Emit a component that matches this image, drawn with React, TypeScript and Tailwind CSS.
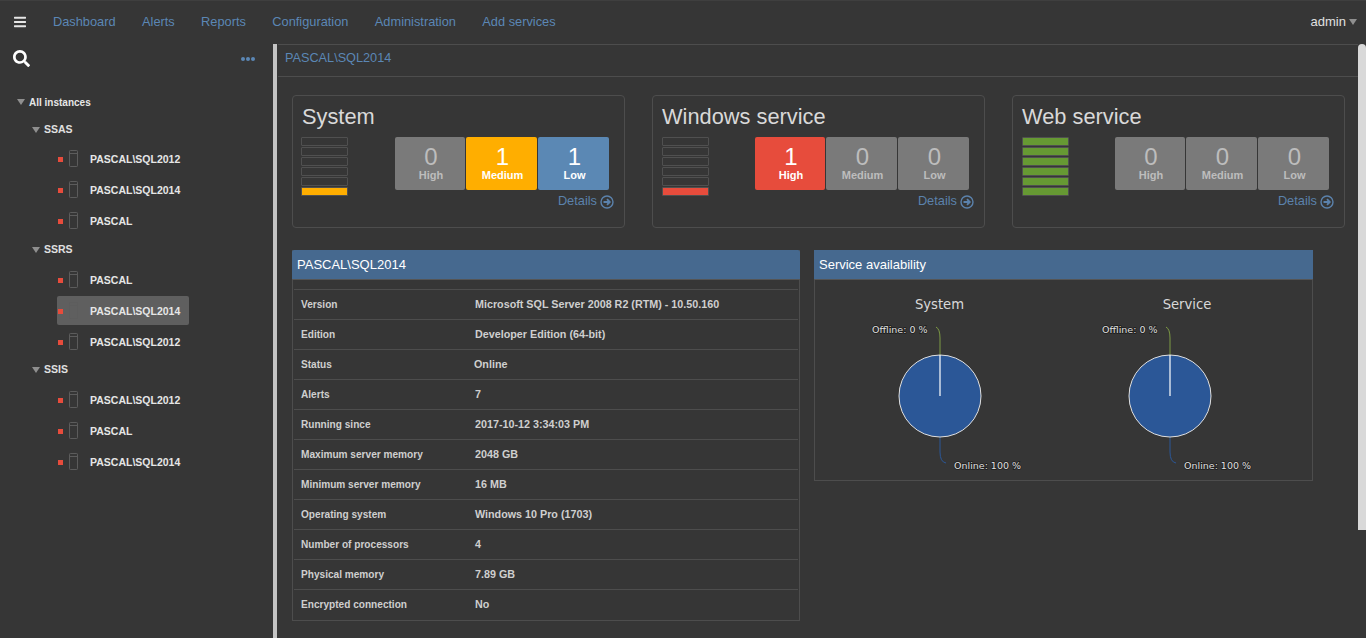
import { FaBars, FaSearch } from 'react-icons/fa';

const NAV = ['Dashboard', 'Alerts', 'Reports', 'Configuration', 'Administration', 'Add services'];

const TREE = [
  { name: 'SSAS', top: 'h-[29px]', items: ['PASCAL\\SQL2012', 'PASCAL\\SQL2014', 'PASCAL'] },
  { name: 'SSRS', top: 'h-[28px] pb-[3px]', items: ['PASCAL', 'PASCAL\\SQL2014', 'PASCAL\\SQL2012'], selected: 1 },
  { name: 'SSIS', top: 'h-[27px] pb-[4px]', items: ['PASCAL\\SQL2012', 'PASCAL', 'PASCAL\\SQL2014'] },
];

const INFO = [
  ['Version', 'Microsoft SQL Server 2008 R2 (RTM) - 10.50.160'],
  ['Edition', 'Developer Edition (64-bit)'],
  ['Status', 'Online'],
  ['Alerts', '7'],
  ['Running since', '2017-10-12 3:34:03 PM'],
  ['Maximum server memory', '2048 GB'],
  ['Minimum server memory', '16 MB'],
  ['Operating system', 'Windows 10 Pro (1703)'],
  ['Number of processors', '4'],
  ['Physical memory', '7.89 GB'],
  ['Encrypted connection', 'No'],
];

const CARDS = [
  {
    title: 'System',
    gaugeOffset: '-ml-px',
    bars: ['', '', '', '', '', 'bg-[#ffae00]'],
    tiles: [
      { n: 0, label: 'High', tone: 'bg-[#7a7a7a] text-[#bdbdbd]' },
      { n: 1, label: 'Medium', tone: 'bg-[#ffae00] text-white' },
      { n: 1, label: 'Low', tone: 'bg-[#5b88b4] text-white' },
    ],
  },
  {
    title: 'Windows service',
    gaugeOffset: '',
    bars: ['', '', '', '', '', 'bg-[#e74c3c]'],
    tiles: [
      { n: 1, label: 'High', tone: 'bg-[#e74c3c] text-white' },
      { n: 0, label: 'Medium', tone: 'bg-[#7a7a7a] text-[#bdbdbd]' },
      { n: 0, label: 'Low', tone: 'bg-[#7a7a7a] text-[#bdbdbd]' },
    ],
  },
  {
    title: 'Web service',
    gaugeOffset: '',
    bars: ['bg-[#669933]', 'bg-[#669933]', 'bg-[#669933]', 'bg-[#669933]', 'bg-[#669933]', 'bg-[#669933]'],
    tiles: [
      { n: 0, label: 'High', tone: 'bg-[#7a7a7a] text-[#bdbdbd]' },
      { n: 0, label: 'Medium', tone: 'bg-[#7a7a7a] text-[#bdbdbd]' },
      { n: 0, label: 'Low', tone: 'bg-[#7a7a7a] text-[#bdbdbd]' },
    ],
  },
];

function Caret({ className }: { className: string }) {
  return (
    <svg viewBox="0 0 8 6" className={className}>
      <path d="M0 0h8L4 6z" fill="#8f8f8f" />
    </svg>
  );
}

function ServerIcon() {
  return (
    <svg viewBox="0 0 9 17" className="h-[17px] w-[9px]" fill="none" stroke="#5c5c5c" strokeWidth="1">
      <rect x="0.5" y="0.5" width="8" height="16" rx="0.75" />
      <path d="M0.5 3.5h8" />
    </svg>
  );
}

function TreeItem({ label, selected }: { label: string; selected?: boolean }) {
  return (
    <div className="relative flex h-[31px] items-center pl-[58px]">
      {selected && <div className="absolute left-[57px] top-0 h-[29px] w-[132px] rounded-[2px] bg-[#5f5f5f]" />}
      <div className="relative h-[5px] w-[5px] bg-[#e74c3c]" />
      <div className={`relative -mt-[2px] ml-[6px] ${selected ? 'opacity-50' : ''}`}>
        <ServerIcon />
      </div>
      <span className="relative ml-[12px] text-[10.5px] font-bold text-[#e6e6e6]">{label}</span>
    </div>
  );
}

function ArrowCircle() {
  return (
    <svg viewBox="0 0 14 14" className="ml-[3px] mt-[1px] h-[14px] w-[14px]" fill="none" stroke="#5b82ac">
      <circle cx="7" cy="7" r="6" strokeWidth="1.4" />
      <path d="M3.5 7h6M7 4.2 9.8 7 7 9.8" strokeWidth="1.8" />
    </svg>
  );
}

function Card({ card }: { card: (typeof CARDS)[number] }) {
  return (
    <div className="h-[133px] w-[333px] rounded-[4px] border border-[#4d4d4d] pl-[9px] pr-[15px] pt-[7px]">
      <div className="text-[21.8px] leading-[28px] text-[#d9d9d9]">{card.title}</div>
      <div className="mt-[6px] flex justify-between">
        <div className={`flex w-[47px] flex-col gap-[1px] ${card.gaugeOffset}`}>
          {card.bars.map((bar, i) => (
            <div key={i} className={`h-[9px] rounded-[1px] border border-[#505050] ${bar}`} />
          ))}
        </div>
        <div>
          <div className="flex gap-[1px]">
            {card.tiles.map((tile, i) => (
              <div
                key={i}
                className={`flex h-[53px] flex-col items-center rounded-[2px] pl-[2px] pt-[7px] ${i === 0 ? 'w-[70px]' : 'w-[71px]'} ${tile.tone}`}
              >
                <div className="text-[24px] leading-[25px]">{tile.n}</div>
                <div className="text-[11px] font-bold leading-[13px]">{tile.label}</div>
              </div>
            ))}
          </div>
          <div className="-mr-[5px] mt-[2px] flex items-center justify-end text-[12.8px] leading-[18px] text-[#5b82ac]">
            Details
            <ArrowCircle />
          </div>
        </div>
      </div>
    </div>
  );
}

function Pie({ title, titleX }: { title: string; titleX: number }) {
  const halo = { stroke: '#1c1c1c', strokeWidth: 1.5, paintOrder: 'stroke' as const };
  return (
    <svg viewBox="0 0 230 200" className="h-[200px] w-[230px]">
      <text x={titleX} y="29" textAnchor="middle" fontFamily="'DejaVu Sans', sans-serif" fontSize="13.2" fill="#d9d9d9">
        {title}
      </text>
      <path d="M125 75V58Q125 49 121 47" fill="none" stroke="#7d9a44" />
      <path d="M125 157V172Q125 182 131 183" fill="none" stroke="#2b5797" />
      <circle cx="125" cy="116" r="41" fill="#2b5797" stroke="#e0e0e0" strokeWidth="1" />
      <path d="M125 75v41" stroke="#ffffff" strokeWidth="1.2" />
      <text x="57" y="53" fontFamily="'DejaVu Sans', sans-serif" fontSize="9.5" fill="#e0e0e0" style={halo}>
        Offline: 0 %
      </text>
      <text x="139" y="189" fontFamily="'DejaVu Sans', sans-serif" fontSize="9.5" fill="#e0e0e0" style={halo}>
        Online: 100 %
      </text>
    </svg>
  );
}

export default function App() {
  return (
    <div className="flex h-[638px] w-[1366px] flex-col overflow-hidden bg-[#363636] font-['Liberation_Sans',Arial,sans-serif]">
      {/* top bar */}
      <div className="flex h-[44px] shrink-0 items-center border-t border-[#3f3f3f] pb-[2px] pl-[14px] pr-[9px]">
        <FaBars className="h-[14px] w-[12px] text-[#e6e6e6]" />
        <div className="ml-[27px] flex gap-[26.4px] text-[12.8px] text-[#5b87b5]">
          {NAV.map((item) => (
            <span key={item}>{item}</span>
          ))}
        </div>
        <div className="ml-auto flex items-center text-[13px] text-[#e0e0e0]">
          admin
          <Caret className="ml-[3px] h-[6px] w-[8px]" />
        </div>
      </div>

      <div className="flex min-h-0 flex-1">
        {/* sidebar */}
        <div className="w-[273px] shrink-0">
          <div className="flex h-[29px] items-center justify-between pl-[13px] pr-[18px]">
            <FaSearch className="h-[17px] w-[17px] text-white" />
            <div className="flex gap-[1px]">
              <div className="h-[4px] w-[4px] rounded-full bg-[#5b87b5]" />
              <div className="h-[4px] w-[4px] rounded-full bg-[#5b87b5]" />
              <div className="h-[4px] w-[4px] rounded-full bg-[#5b87b5]" />
            </div>
          </div>
          <div className="mt-[16px] flex h-[26px] items-center pl-[17px]">
            <Caret className="mr-[4px] h-[6px] w-[8px]" />
            <span className="text-[10px] font-bold text-[#e6e6e6]">All instances</span>
          </div>
          {TREE.map((group) => (
            <div key={group.name}>
              <div className={`flex items-center pl-[32px] ${group.top}`}>
                <Caret className="mr-[4px] h-[6px] w-[8px]" />
                <span className="text-[10.5px] font-bold text-[#e0e0e0]">{group.name}</span>
              </div>
              {group.items.map((item, i) => (
                <TreeItem key={item} label={item} selected={group.selected === i} />
              ))}
            </div>
          ))}
        </div>

        {/* splitter */}
        <div className="w-[4px] shrink-0 bg-[#c4c4c4]" />

        {/* main */}
        <div className="ml-[1px] flex min-w-0 flex-1 flex-col">
          <div className="flex h-[33px] shrink-0 items-center border-y border-[#4d4d4d] pb-[3px] pl-[7px] text-[12.7px] text-[#5b87b5]">
            PASCAL\SQL2014
          </div>

          <div className="ml-[14px] mt-[18px] flex gap-[27px]">
            {CARDS.map((card) => (
              <Card key={card.title} card={card} />
            ))}
          </div>

          <div className="ml-[14px] mt-[22px] flex items-start gap-[14px]">
            <div className="w-[508px] border border-t-0 border-[#4d4d4d] pb-[1px]">
              <div className="-mx-[1px] flex h-[30px] items-center rounded-t-[2px] border-b border-[#555] bg-[#46698f] pl-[5px] text-[13px] text-white">
                PASCAL\SQL2014
              </div>
              <div className="mx-px pt-[9px]">
                {INFO.map(([label, value]) => (
                  <div key={label} className="flex h-[30px] items-center border-t border-[#4d4d4d] pl-[7px] font-bold text-[#cfcfcf]">
                    <span className="w-[174px] text-[10.1px]">{label}</span>
                    <span className={`text-[10.75px] ${label === 'Status' ? '-ml-px' : ''}`}>{value}</span>
                  </div>
                ))}
              </div>
            </div>

            <div className="h-[231px] w-[499px] border border-t-0 border-[#4d4d4d]">
              <div className="-mx-[1px] flex h-[30px] items-center border-b border-[#555] bg-[#46698f] pl-[5px] text-[13px] text-white">
                Service availability
              </div>
              <div className="flex">
                <Pie title="System" titleX={124.5} />
                <Pie title="Service" titleX={142} />
              </div>
            </div>
          </div>
        </div>

        {/* scrollbar */}
        <div className="w-[8px] shrink-0">
          <div className="h-[486px] rounded-t-[4px] bg-[#d9d9d9]" />
        </div>
      </div>
    </div>
  );
}
